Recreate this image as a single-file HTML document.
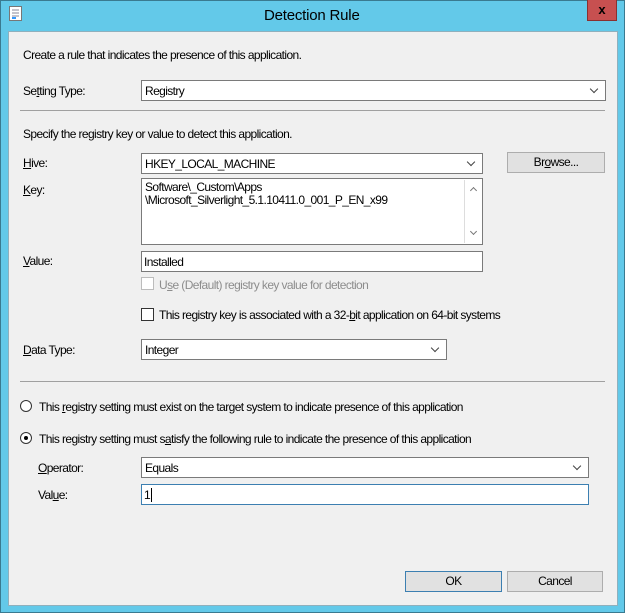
<!DOCTYPE html>
<html><head><meta charset="utf-8"><style>
*{box-sizing:border-box;margin:0;padding:0}
body{width:625px;height:613px;background:#64c8e8;font-family:"Liberation Sans",sans-serif;font-size:12px;color:#000;position:relative;overflow:hidden}
.frame{position:absolute;left:0;top:0;width:625px;height:613px;border:1px solid #3a7a90;background:#63c9e9}
.client{position:absolute;left:8px;top:31px;width:610px;height:575px;background:#f0f0f0;border:1px solid #8fb0bd}
.a{position:absolute;white-space:nowrap;letter-spacing:-0.6px}
.box{position:absolute;background:#fff;border:1px solid #7a7a7a}
.dd::after{content:"";position:absolute;right:8px;top:5px;width:5px;height:5px;border-right:1.5px solid #444;border-bottom:1.5px solid #444;transform:rotate(45deg)}
.btn{position:absolute;background:#e1e1e1;border:1px solid #adadad;text-align:center;line-height:18px;letter-spacing:-0.6px}
.sep{position:absolute;height:1px;background:#a0a0a0;left:20px;width:585px}
.cb{position:absolute;width:13px;height:13px;border:1px solid #333;background:#fff}
.rb{position:absolute;width:12px;height:12px;border:1px solid #333;border-radius:50%;background:#fff}
u{text-decoration:underline}
</style></head><body>
<div class="frame"></div>
<svg style="position:absolute;left:9px;top:6px" width="13" height="15"><rect x="0.5" y="0.5" width="12" height="14" fill="#fff" stroke="#777"/><path d="M3 4h7M3 7h7M3 10h7" stroke="#889" /><rect x="3" y="11" width="4" height="2" fill="#39f"/></svg>
<div class="a" style="left:264px;top:7px;font-size:15px;letter-spacing:-0.2px">Detection Rule</div>
<div style="position:absolute;left:587px;top:0;width:30px;height:21px;background:#c75050;border:1px solid #8a3030;border-top:none;color:#000;font-weight:bold;text-align:center;font-size:13px;line-height:19px">x</div>
<div class="client"></div>
<div class="a" style="left:23px;top:48px">Create a rule that indicates the presence of this application.</div>
<div class="a" style="left:23px;top:84px">Se<u>t</u>ting Type:</div>
<div class="box dd" style="left:141px;top:80px;width:465px;height:21px"><span class="a" style="left:3px;top:3px">Registry</span></div>
<div class="sep" style="top:110px"></div>
<div class="a" style="left:23px;top:127px">Specify the registry key or value to detect this application.</div>
<div class="a" style="left:23px;top:156px"><u>H</u>ive:</div>
<div class="box dd" style="left:141px;top:153px;width:342px;height:21px"><span class="a" style="left:3px;top:3px">HKEY_LOCAL_MACHINE</span></div>
<div class="btn" style="left:507px;top:152px;width:98px;height:21px">Br<u>o</u>wse...</div>
<div class="a" style="left:23px;top:183px"><u>K</u>ey:</div>
<div class="box" style="left:141px;top:178px;width:342px;height:67px"><span class="a" style="left:3px;top:2px;line-height:13px">Software\_Custom\Apps<br>\Microsoft_Silverlight_5.1.10411.0_001_P_EN_x99</span>
<div style="position:absolute;right:1px;top:1px;width:17px;height:63px;background:#fff;border-left:1px solid #ddd"></div>
<div style="position:absolute;right:6px;top:9px;width:5px;height:5px;border-left:1px solid #777;border-top:1px solid #777;transform:rotate(45deg)"></div>
<div style="position:absolute;right:6px;top:50px;width:5px;height:5px;border-right:1px solid #777;border-bottom:1px solid #777;transform:rotate(45deg)"></div></div>
<div class="a" style="left:23px;top:254px"><u>V</u>alue:</div>
<div class="box" style="left:141px;top:251px;width:342px;height:21px"><span class="a" style="left:2px;top:3px">Installed</span></div>
<div class="cb" style="left:141px;top:277px;border-color:#bcbcbc"></div>
<div class="a" style="left:159px;top:278px;color:#8d8d8d">U<u>s</u>e (Default) registry key value for detection</div>
<div class="cb" style="left:141px;top:308px"></div>
<div class="a" style="left:159px;top:308px">This registry key is associated with a 32-<u>b</u>it application on 64-bit systems</div>
<div class="a" style="left:23px;top:343px"><u>D</u>ata Type:</div>
<div class="box dd" style="left:141px;top:339px;width:306px;height:21px"><span class="a" style="left:3px;top:3px">Integer</span></div>
<div class="sep" style="top:381px"></div>
<div class="rb" style="left:20px;top:400px"></div>
<div class="a" style="left:39px;top:400px">This <u>r</u>egistry setting must exist on the target system to indicate presence of this application</div>
<div class="rb" style="left:20px;top:432px"><div style="position:absolute;left:3px;top:3px;width:4px;height:4px;border-radius:50%;background:#000"></div></div>
<div class="a" style="left:39px;top:432px">This registry setting must s<u>a</u>tisfy the following rule to indicate the presence of this application</div>
<div class="a" style="left:38px;top:461px"><u>O</u>perator:</div>
<div class="box dd" style="left:141px;top:457px;width:448px;height:21px"><span class="a" style="left:3px;top:3px">Equals</span></div>
<div class="a" style="left:38px;top:488px">Val<u>u</u>e:</div>
<div class="box" style="left:141px;top:484px;width:448px;height:21px;border-color:#3c7fb1"><span class="a" style="left:2px;top:3px">1<span style="border-left:1px solid #000;margin-left:1px"></span></span></div>
<div class="btn" style="left:405px;top:571px;width:97px;height:21px;border-color:#3c7fb1">OK</div>
<div class="btn" style="left:507px;top:571px;width:96px;height:21px">Cancel</div>
</body></html>
